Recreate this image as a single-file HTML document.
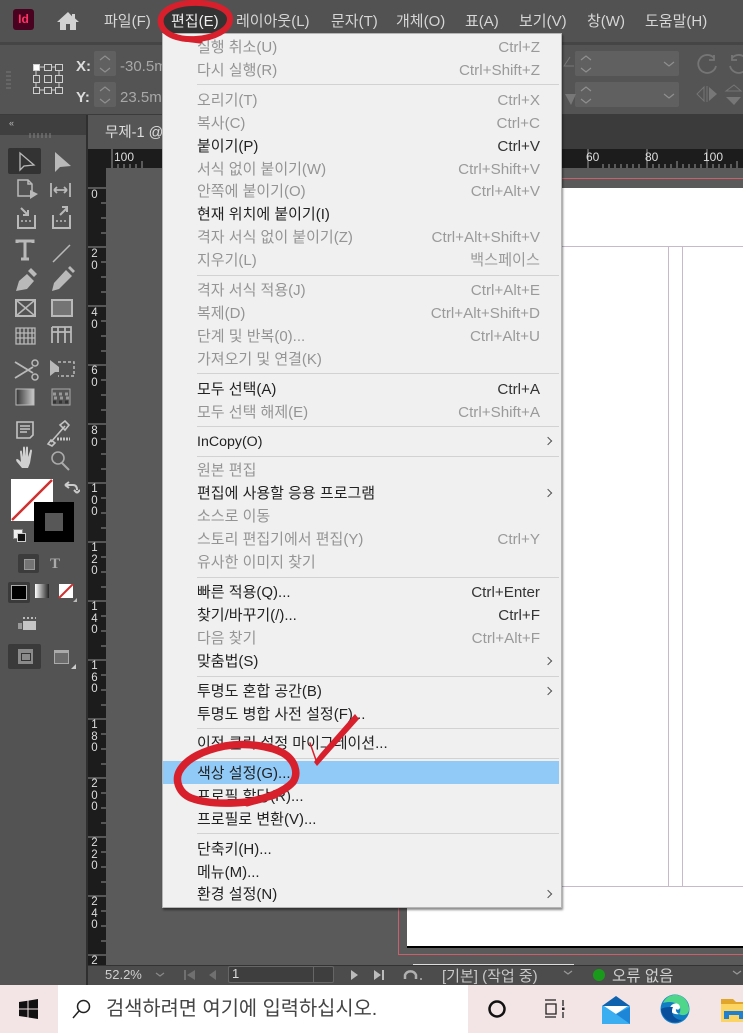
<!DOCTYPE html>
<html lang="ko"><head><meta charset="utf-8"><title>InDesign</title>
<style>
html,body{margin:0;padding:0;background:#535353}
#a{position:relative;width:743px;height:1033px;overflow:hidden;background:#535353;font-family:"Liberation Sans","Noto Sans CJK KR",sans-serif;filter:blur(.35px)}
#a div,#a span,#a svg{position:absolute}
.b{white-space:nowrap}
.m{color:#d6d6d6;font-size:15px;top:12px;line-height:20px;white-space:nowrap}
.r{left:197px;font-size:15px;line-height:20px;color:#222;white-space:nowrap;margin-top:1px}
.d{color:#949494}
.s{right:203px;font-size:15.2px;line-height:20px;color:#333;white-space:nowrap;margin-top:1px}
.sd{color:#9a9a9a}
.sep{left:197px;width:362px;height:1px;background:#d2d2d2}
.ar{left:545px;width:5px;height:5px;border-top:1.3px solid #555;border-right:1.3px solid #555;transform:rotate(45deg)}
.rn{color:#ddd;font-size:11.5px;line-height:11.5px;left:90px;width:9px;text-align:center;white-space:normal}
.rt{color:#ddd;font-size:12px;top:150px;line-height:14px}
.sp{background:#606060;border-radius:2px}
</style></head><body><div id="a">
<!-- backgrounds -->
<div style="left:0;top:0;width:743px;height:42px;background:#525252"></div>
<div style="left:0;top:42px;width:743px;height:3px;background:#454545"></div>
<div style="left:0;top:45px;width:743px;height:70px;background:#545454"></div>
<div style="left:0;top:114px;width:743px;height:36px;background:#3b3b3b"></div>
<div style="left:0;top:115px;width:86px;height:20px;background:#3f3f3f"></div>
<div style="left:0;top:135px;width:86px;height:850px;background:#535353"></div>
<div style="left:86px;top:115px;width:2px;height:870px;background:#2f2f2f"></div>
<div style="left:88px;top:115px;width:76px;height:35px;background:#555"></div>
<!-- pasteboard -->
<div style="left:88px;top:150px;width:655px;height:815px;background:#5a5a5a"></div>
<!-- page -->
<div style="left:398px;top:178px;width:345px;height:777px;border:1px solid #c9606a;border-right:0;box-sizing:border-box"></div>
<div style="left:407px;top:188px;width:336px;height:758px;background:#fff"></div>
<div style="left:407px;top:946px;width:336px;height:2px;background:#000"></div>
<div style="left:407px;top:246px;width:336px;height:1px;background:#c8b8cc"></div>
<div style="left:407px;top:886px;width:336px;height:1px;background:#c8b8cc"></div>
<div style="left:668px;top:246px;width:1px;height:640px;background:#c8b8cc"></div>
<div style="left:682px;top:246px;width:1px;height:640px;background:#c8b8cc"></div>
<!-- rulers -->
<div style="left:88px;top:149px;width:655px;height:19px;background:#1c1c1c"></div>
<div style="left:88px;top:168px;width:18px;height:797px;background:#1c1c1c"></div>
<svg style="left:88px;top:149px" width="655" height="19"><path stroke="#999" stroke-width="1" fill="none" d="M24 0V19M500 0V19M559 0V19M619 0V19M30 15V19M36 15V19M42 15V19M48 15V19M54 12V19M515 15V19M521 15V19M527 15V19M533 15V19M539 15V19M545 15V19M551 15V19M565 15V19M571 15V19M577 15V19M583 15V19M589 12V19M595 15V19M601 15V19M607 15V19M613 15V19M625 15V19M631 15V19M637 15V19M643 15V19M649 12V19"/></svg>
<svg style="left:88px;top:168px" width="18" height="797"><path stroke="#909090" stroke-width="1" fill="none" d="M0 20H18M0 79H18M0 138H18M0 197H18M0 256H18M0 315H18M0 374H18M0 433H18M0 492H18M0 551H18M0 610H18M0 669H18M0 728H18M0 787H18M13 35H18M13 50H18M13 65H18M13 94H18M13 109H18M13 124H18M13 153H18M13 168H18M13 183H18M13 212H18M13 227H18M13 242H18M13 271H18M13 286H18M13 301H18M13 330H18M13 345H18M13 360H18M13 389H18M13 404H18M13 419H18M13 448H18M13 463H18M13 478H18M13 507H18M13 522H18M13 537H18M13 566H18M13 581H18M13 596H18M13 625H18M13 640H18M13 655H18M13 684H18M13 699H18M13 714H18M13 743H18M13 758H18M13 773H18"/></svg>
<span class="rt" style="left:114px">100</span><span class="rt" style="left:586px">60</span><span class="rt" style="left:645px">80</span><span class="rt" style="left:703px">100</span>
<div class="rn" style="top:190px">0</div>
<div class="rn" style="top:249px">2<br>0</div>
<div class="rn" style="top:308px">4<br>0</div>
<div class="rn" style="top:366px">6<br>0</div>
<div class="rn" style="top:426px">8<br>0</div>
<div class="rn" style="top:484px">1<br>0<br>0</div>
<div class="rn" style="top:543px">1<br>2<br>0</div>
<div class="rn" style="top:602px">1<br>4<br>0</div>
<div class="rn" style="top:661px">1<br>6<br>0</div>
<div class="rn" style="top:720px">1<br>8<br>0</div>
<div class="rn" style="top:779px">2<br>0<br>0</div>
<div class="rn" style="top:838px">2<br>2<br>0</div>
<div class="rn" style="top:897px">2<br>4<br>0</div>
<div class="rn" style="top:956px">2</div>
<span class="b" style="left:105px;top:123px;font-size:14.5px;line-height:20px;color:#ddd">무제-1 @</span>
<!-- title bar -->
<div style="left:13px;top:9px;width:21px;height:21px;background:#49021f;border-radius:3px"></div>
<span style="left:13px;top:9px;width:21px;text-align:center;font-size:12px;font-weight:bold;line-height:20px;color:#ff3366">Id</span>
<svg style="left:56px;top:11px" width="24" height="20"><path fill="#d2d2d2" d="M12 1 1 11h3v8h6v-6h4v6h6v-8h3l-4-3.600V3h-3v2.200z"/></svg>
<svg style="left:0;top:0" width="240" height="50"><ellipse cx="195" cy="21" rx="33" ry="16" fill="#333"/></svg>
<span class="m" style="left:104px">파일(F)</span>
<span class="m" style="left:171px;color:#eee">편집(E)</span>
<span class="m" style="left:236px">레이아웃(L)</span>
<span class="m" style="left:331px">문자(T)</span>
<span class="m" style="left:396px">개체(O)</span>
<span class="m" style="left:465px">표(A)</span>
<span class="m" style="left:519px">보기(V)</span>
<span class="m" style="left:587px">창(W)</span>
<span class="m" style="left:645px">도움말(H)</span>
<!-- control bar -->
<svg style="left:4px;top:60px" width="60" height="40"><path stroke="#777" d="M2 12h5M2 16h5M2 20h5M2 24h5M2 28h5" fill="none"/></svg>
<svg style="left:32px;top:63px" width="32" height="32" fill="none" stroke="#cfcfcf" stroke-width="1"><rect x="1.500" y="1.500" width="6" height="6" fill="#fff"/><rect x="12.500" y="1.500" width="7" height="6"/><rect x="23.500" y="1.500" width="7" height="6"/><rect x="1.500" y="12.500" width="6" height="7"/><rect x="12.500" y="12.500" width="7" height="7"/><rect x="23.500" y="12.500" width="7" height="7"/><rect x="1.500" y="24.500" width="6" height="6"/><rect x="12.500" y="24.500" width="7" height="6"/><rect x="23.500" y="24.500" width="7" height="6"/><path d="M8 4h4M20 4h3M4 8v4M27 8v4M4 20v4M27 20v4M8 27h4M20 27h3"/></svg>
<span style="left:76px;top:57px;font-size:15px;font-weight:bold;line-height:20px;color:#ddd">X:</span>
<span style="left:76px;top:88px;font-size:15px;font-weight:bold;line-height:20px;color:#ddd">Y:</span>
<div class="sp" style="left:94px;top:51px;width:22px;height:25px"></div>
<div class="sp" style="left:94px;top:82px;width:22px;height:25px"></div>
<svg style="left:94px;top:51px" width="22" height="56" fill="none" stroke="#8f8f8f" stroke-width="1.200"><path d="M6 9l5-4 5 4M6 17l5 4 5-4M6 40l5-4 5 4M6 48l5 4 5-4"/></svg>
<span class="b" style="left:120px;top:57px;font-size:15px;line-height:20px;color:#a8a8a8">-30.5m</span>
<span class="b" style="left:120px;top:88px;font-size:15px;line-height:20px;color:#a8a8a8">23.5m</span>
<div class="sp" style="left:575px;top:51px;width:104px;height:25px"></div>
<div class="sp" style="left:575px;top:82px;width:104px;height:25px"></div>
<svg style="left:575px;top:51px" width="104" height="56" fill="none" stroke="#8f8f8f" stroke-width="1.200"><path d="M6 9l5-4 5 4M6 17l5 4 5-4M6 40l5-4 5 4M6 48l5 4 5-4M89 11l5 4 5-4M89 43l5 4 5-4"/></svg>
<svg style="left:562px;top:50px" width="14" height="60"><path fill="#777" d="M3 44h11l-5 11z"/><path fill="none" stroke="#777" d="M8 7 2 16h10"/></svg>
<svg style="left:688px;top:50px" width="55" height="60" fill="none" stroke="#757575" stroke-width="1.800"><path d="M26 8a9 9 0 1 0 2 8M26 5v5h-5"/><path d="M44 8a9 9 0 1 1 -2 8M44 5v5h5"/><path d="M19 36v16" stroke-width="1"/><path fill="#777" stroke="none" d="M21 37l8 7-8 7z"/><path d="M16 37l-7 7 7 7z" stroke-width="1"/><path fill="#777" stroke="none" d="M38 47h15l-7 8z"/><path d="M38 41h15l-7-6z" stroke-width="1"/></svg>
<!-- tools -->
<span style="left:9px;top:118px;font-size:9px;line-height:10px;color:#bbb">«</span>
<svg style="left:28px;top:133px" width="28" height="5"><path stroke="#808080" d="M2 0v5M6 0v5M10 0v5M14 0v5M18 0v5M22 0v5"/></svg>
<div style="left:8px;top:148px;width:33px;height:26px;background:#333;border-radius:2px"></div>
<svg style="left:8px;top:148px" width="75" height="300" fill="none" stroke="#b9b9b9" stroke-width="1.500">
<path d="M12 5v17l4-4 10-1z" stroke-width="1.300"/>
<path fill="#b9b9b9" stroke="none" d="M47 4v20l5-5 11-1z"/>
<path d="M12 32h8l4 4v12H10V32zM20 32v4h4"/><path fill="#b9b9b9" stroke="none" d="M22 42l8 4-8 5z"/>
<path d="M43 35v14M62 35v14M46 42h13M46 42l3-3M46 42l3 3M59 42l-3-3M59 42l-3 3" stroke-width="1.800"/>
<g transform="translate(0,-3)"><path d="M10 70v13h17V70" stroke-width="2"/><path d="M13 63l7 7M20 65v5h-5" stroke-width="2"/><path d="M13 76h11" stroke-dasharray="2 2"/>
<path d="M45 70v13h17V70" stroke-width="2"/><path d="M52 70l7-7M54 62h5v5" stroke-width="2"/><path d="M48 76h11" stroke-dasharray="2 2"/></g>
<g transform="translate(0,-4)"><path d="M9 99v-2h16v2M17 97v18M13 115h8" stroke-width="3"/>
<path d="M45 118l17-17"/></g>
<g transform="translate(0,-7)"><path fill="#b9b9b9" stroke="none" d="M8 150l3-10 8-7 7 7-7 8zM20 130l3-3 6 6-3 3z"/>
<path fill="#b9b9b9" stroke="none" d="M44 150l2-8 12-13 6 6-13 13zM60 127l2-2 5 5-2 2z"/></g>
<rect x="8" y="152" width="19" height="16" stroke-width="2"/><path d="M8 152l19 16M27 152L8 168"/>
<rect x="44" y="152" width="20" height="16" stroke-width="2" fill="#747474"/>
<g transform="translate(0,-10)"><path d="M8 190h19v16H8zM8 195h19M8 200h19M12 190v16M16 190v16M20 190v16M24 190v16" stroke-width="1.300"/>
<path d="M44 189h19v16M44 189v16M44 194h19M50 189v16M57 189v16" stroke-width="1.800"/></g>
<circle cx="27" cy="215" r="3"/><circle cx="27" cy="229" r="3"/><path d="M7 214l18 11M7 230l18-11" stroke-width="1.800"/>
<path fill="#b9b9b9" stroke="none" d="M42 212v16l5-4 4 0 0-5z"/><path d="M50 214h16v14H50" stroke-dasharray="3 2"/>
</svg>
<svg style="left:15px;top:388px;" width="60" height="20"><defs><linearGradient id="g1"><stop offset="0" stop-color="#333"/><stop offset="1" stop-color="#ccc"/></linearGradient></defs><rect x="1" y="1" width="18" height="16" fill="url(#g1)" stroke="#bbb"/><rect x="37" y="1" width="18" height="16" fill="#555" stroke="#aaa"/><path stroke="#999" stroke-dasharray="3 3" stroke-width="3" d="M38 6h16M39 10h16"/><path stroke="#333" stroke-dasharray="3 3" stroke-width="3" d="M38 14h16"/></svg>
<svg style="left:14px;top:420px" width="62" height="54" fill="none" stroke="#c3c3c3" stroke-width="1.600"><path d="M3 2h16v13l-3 3H3zM6 6h10M6 9h10M6 12h7"/><path d="M37 22l14-16M46 5l5-4 4 4-4 5zM34 24l3-4 4 3-3 3z"/><path d="M43 19h13" stroke-width="3" stroke-dasharray="2 1"/><g transform="translate(0,4)"><path fill="#d0d0d0" stroke="none" d="M3 38c-2-3 0-4 2-2l2 2-1-10c0-2 2-2 2 0l1 5V24c0-2 2-2 2 0v8l1-8c0-2 2-2 2 0v9l2-6c0-2 2-2 2 0l-2 12-2 5H8z"/><circle cx="44" cy="34" r="6" stroke="#aaa"/><path d="M48 39l7 7" stroke="#aaa" stroke-width="2"/></g></svg>
<!-- fill/stroke -->
<div style="left:11px;top:479px;width:42px;height:42px;background:#fff"></div>
<svg style="left:11px;top:479px" width="42" height="42"><path d="M1 41L41 1" stroke="#d03030" stroke-width="2.500"/></svg>
<div style="left:34px;top:502px;width:40px;height:40px;background:#000"></div>
<div style="left:45px;top:513px;width:18px;height:18px;background:#575757"></div>
<svg style="left:64px;top:480px" width="16" height="16" fill="none" stroke="#ccc" stroke-width="2"><path d="M2 5h7q4 0 4 5M1 5l4-3M1 5l4 3M13 13l-3-3M13 13l3-3"/></svg>
<div style="left:13px;top:529px;width:8px;height:8px;background:#eee;border:1px solid #888"></div>
<div style="left:17px;top:533px;width:7px;height:7px;background:#111;border:1px solid #ccc"></div>
<div style="left:18px;top:554px;width:21px;height:19px;background:#3c3c3c;border-radius:2px"></div>
<div style="left:24px;top:559px;width:9px;height:9px;background:#747474;border:1px solid #999"></div>
<span style="left:50px;top:554px;font-family:'Liberation Serif',serif;font-weight:bold;font-size:15px;line-height:20px;color:#aaa">T</span>
<div style="left:8px;top:582px;width:22px;height:21px;background:#3a3a3a;border-radius:2px"></div>
<div style="left:11px;top:585px;width:14px;height:13px;background:#000;border:1px solid #aaa"></div>
<svg style="left:35px;top:584px" width="42" height="22"><defs><linearGradient id="g2"><stop offset="0" stop-color="#fff"/><stop offset="1" stop-color="#222"/></linearGradient></defs><rect width="14" height="14" fill="url(#g2)"/><rect x="24" width="14" height="14" fill="#fff"/><path d="M24 14L38 0" stroke="#d03030" stroke-width="2"/><path d="M38 18h4v-4z" fill="#bbb"/></svg>
<svg style="left:18px;top:616px" width="18" height="18"><rect x="5" y="5" width="13" height="9" fill="#c5c5c5"/><path stroke="#bbb" stroke-width="2" stroke-dasharray="2 2" d="M5 2h13M0 9h4"/><rect x="0" y="7" width="4" height="6" fill="#999"/></svg>
<div style="left:8px;top:644px;width:33px;height:25px;background:#3a3a3a;border-radius:2px"></div>
<div style="left:18px;top:649px;width:15px;height:15px;background:#8a8a8a"></div>
<div style="left:21px;top:653px;width:8px;height:6px;border:1px solid #333"></div>
<div style="left:54px;top:650px;width:15px;height:14px;background:#6c6c6c;border:1px solid #aaa;border-top:3px solid #aaa;box-sizing:border-box"></div>
<svg style="left:71px;top:664px" width="5" height="5"><path d="M5 0v5H0z" fill="#ccc"/></svg>
<!-- status bar -->
<div style="left:88px;top:965px;width:655px;height:20px;background:#4c4c4c;border-top:1px solid #333;box-sizing:border-box"></div>
<span style="left:105px;top:966px;font-size:13px;line-height:17px;color:#cfcfcf">52.2%</span>
<svg style="left:150px;top:966px" width="240" height="18" fill="none"><path stroke="#8a8a8a" stroke-width="1.200" d="M6 7l4 3 4-3M166 7l4 3 4-3"/><path fill="#707070" d="M36 4v10h-2V4zM45 4v10l-8-5zM66 4v10l-7-5z"/><path fill="#bbb" d="M201 4l7 5-7 5zM224 4l7 5-7 5zM232 4h2v10h-2z"/></svg>
<div style="left:228px;top:966px;width:106px;height:17px;background:#3e3e3e;border:1px solid #666;box-sizing:border-box;border-radius:2px"></div>
<div style="left:313px;top:966px;width:1px;height:17px;background:#666"></div>
<span style="left:232px;top:965px;font-size:13px;line-height:18px;color:#ddd">1</span>
<svg style="left:403px;top:966px" width="22" height="16" fill="none" stroke="#b0b0b0" stroke-width="2.500"><path d="M2 13V9a6 6 0 0 1 11 0v4"/><path d="M17 13h2" stroke-width="1.500"/></svg>
<div style="left:413px;top:964px;width:161px;height:1px;background:#ddd"></div>
<span class="b" style="left:442px;top:968px;font-size:15px;line-height:18px;color:#c8c8c8">[기본] (작업 중)</span>
<svg style="left:563px;top:968px" width="180" height="12" fill="none" stroke="#999" stroke-width="1.200"><path d="M1 3l4 3 4-3M170 3l4 3 4-3"/></svg>
<div style="left:593px;top:969px;width:12px;height:12px;background:#1a9a1a;border-radius:50%"></div>
<span class="b" style="left:612px;top:968px;font-size:15.5px;line-height:18px;color:#d0d0d0">오류 없음</span>
<!-- taskbar -->
<div style="left:0;top:985px;width:743px;height:48px;background:#f3e4e5"></div>
<div style="left:58px;top:985px;width:410px;height:48px;background:#fff"></div>
<svg style="left:19px;top:999px" width="20" height="20"><path fill="#111" d="M0 3l8.500-1.200V9.500H0zM9.500 1.600 19 0v9.500H9.500zM0 10.500h8.500v7.800L0 17zM9.500 10.500H19V20l-9.500-1.500z"/></svg>
<svg style="left:71px;top:999px" width="20" height="20" fill="none" stroke="#222" stroke-width="1.500"><circle cx="12.500" cy="7.500" r="6"/><path d="M8 12 2 19"/></svg>
<span class="b" style="left:106px;top:997px;font-size:19.8px;line-height:24px;color:#444">검색하려면 여기에 입력하십시오.</span>
<svg style="left:487px;top:999px" width="20" height="20"><circle cx="10" cy="10" r="7.500" fill="none" stroke="#111" stroke-width="2.500"/></svg>
<svg style="left:544px;top:999px" width="24" height="20" fill="none" stroke="#222" stroke-width="1.300"><path d="M1 1h11M1 18h11M2 5h10v10H2zM19 1v6M19 13v6"/><rect x="18" y="8.500" width="2.500" height="2.500" fill="#222" stroke="none"/></svg>
<svg style="left:601px;top:995px" width="30" height="30"><path fill="#0f62ae" d="M15 1 1 11l14 9 14-9z"/><path fill="#3aaef0" d="M1 11h28v18H1z"/><path fill="#fff" d="M3 11h24L15 19z"/><path fill="#1e86d6" d="M15 19 29 12v17z"/></svg>
<svg style="left:660px;top:994px" width="30" height="30"><circle cx="15" cy="15" r="14.500" fill="#0f7cc4"/><path fill="#4fd68a" d="M3 9C8-3 27-2 29 14c1 8-8 8-10 6 2-3 2-8-2-10C12 7 6 8 3 9z"/><path fill="#fff" d="M10 15c0-6 9-8 10-2 0 3-3 3-4 2 0 0-1 3 3 5-3 1-9-1-9-5z"/><path fill="#0a4f9c" d="M1 15c1 11 13 17 21 11-8 0-12-7-9-13-4 0-9 0-12 2z"/></svg>
<svg style="left:721px;top:997px" width="22" height="26"><path fill="#e0a52a" d="M0 2h12l3 3H22v5H0z"/><path fill="#fcd462" d="M0 7h22v18H0z"/><path fill="#1f7fd0" d="M3 14h19v8h-4v-4H8v4H3z"/></svg>
<!-- menu -->
<div style="left:162px;top:33px;width:400px;height:875px;background:#f0f0f0;border:1px solid #b5b5b5;box-sizing:border-box;box-shadow:1px 2px 2px rgba(0,0,0,.45)"></div>
<div style="left:163px;top:761px;width:396px;height:23px;background:#91c9f7"></div>
<div class="sep" style="top:84px"></div><div class="sep" style="top:275px"></div><div class="sep" style="top:373px"></div><div class="sep" style="top:426px"></div><div class="sep" style="top:456px"></div><div class="sep" style="top:577px"></div><div class="sep" style="top:676px"></div><div class="sep" style="top:728px"></div><div class="sep" style="top:758px"></div><div class="sep" style="top:833px"></div>
<span class="r d" style="top:37px">실행 취소(U)</span><span class="s sd" style="top:37px">Ctrl+Z</span>
<span class="r d" style="top:60px">다시 실행(R)</span><span class="s sd" style="top:60px">Ctrl+Shift+Z</span>
<span class="r d" style="top:90px">오리기(T)</span><span class="s sd" style="top:90px">Ctrl+X</span>
<span class="r d" style="top:113px">복사(C)</span><span class="s sd" style="top:113px">Ctrl+C</span>
<span class="r" style="top:136px">붙이기(P)</span><span class="s" style="top:136px">Ctrl+V</span>
<span class="r d" style="top:159px">서식 없이 붙이기(W)</span><span class="s sd" style="top:159px">Ctrl+Shift+V</span>
<span class="r d" style="top:181px">안쪽에 붙이기(O)</span><span class="s sd" style="top:181px">Ctrl+Alt+V</span>
<span class="r" style="top:204px">현재 위치에 붙이기(I)</span>
<span class="r d" style="top:227px">격자 서식 없이 붙이기(Z)</span><span class="s sd" style="top:227px">Ctrl+Alt+Shift+V</span>
<span class="r d" style="top:250px">지우기(L)</span><span class="s sd" style="top:250px">백스페이스</span>
<span class="r d" style="top:280px">격자 서식 적용(J)</span><span class="s sd" style="top:280px">Ctrl+Alt+E</span>
<span class="r d" style="top:303px">복제(D)</span><span class="s sd" style="top:303px">Ctrl+Alt+Shift+D</span>
<span class="r d" style="top:326px">단계 및 반복(0)...</span><span class="s sd" style="top:326px">Ctrl+Alt+U</span>
<span class="r d" style="top:349px">가져오기 및 연결(K)</span>
<span class="r" style="top:379px">모두 선택(A)</span><span class="s" style="top:379px">Ctrl+A</span>
<span class="r d" style="top:402px">모두 선택 해제(E)</span><span class="s sd" style="top:402px">Ctrl+Shift+A</span>
<span class="r" style="top:431px;font-size:14.2px">InCopy(O)</span><div class="ar" style="top:438px"></div>
<span class="r d" style="top:460px">원본 편집</span>
<span class="r" style="top:483px">편집에 사용할 응용 프로그램</span><div class="ar" style="top:490px"></div>
<span class="r d" style="top:506px">소스로 이동</span>
<span class="r d" style="top:529px">스토리 편집기에서 편집(Y)</span><span class="s sd" style="top:529px">Ctrl+Y</span>
<span class="r d" style="top:552px">유사한 이미지 찾기</span>
<span class="r" style="top:582px">빠른 적용(Q)...</span><span class="s" style="top:582px">Ctrl+Enter</span>
<span class="r" style="top:605px">찾기/바꾸기(/)...</span><span class="s" style="top:605px">Ctrl+F</span>
<span class="r d" style="top:628px">다음 찾기</span><span class="s sd" style="top:628px">Ctrl+Alt+F</span>
<span class="r" style="top:651px">맞춤법(S)</span><div class="ar" style="top:658px"></div>
<span class="r" style="top:681px">투명도 혼합 공간(B)</span><div class="ar" style="top:688px"></div>
<span class="r" style="top:704px">투명도 병합 사전 설정(F)...</span>
<span class="r" style="top:733px">이전 클릭 설정 마이그레이션...</span>
<span class="r" style="top:763px">색상 설정(G)...</span>
<span class="r" style="top:786px">프로필 할당(R)...</span>
<span class="r" style="top:809px">프로필로 변환(V)...</span>
<span class="r" style="top:839px">단축키(H)...</span>
<span class="r" style="top:862px">메뉴(M)...</span>
<span class="r" style="top:884px">환경 설정(N)</span><div class="ar" style="top:891px"></div>
<!-- red annotations -->
<svg style="left:0;top:0" width="743" height="1033" fill="none" stroke="#d8202c" stroke-linecap="round" stroke-linejoin="round">
<path d="M161 24c-3-11 10-20 30-21 20-1 39 5 39 16 0 11-16 19-34 20-17 1-32-4-35-15z" stroke-width="6"/>
<path d="M184 39l16 2" stroke-width="5"/>
<path d="M247 802c18-3 37-10 46-20 6-9 2-22-10-29-11-6-34-11-58-7-20 4-39 12-46 26-4 9 0 21 12 26 16 6 36 6 56 4" stroke-width="7.500"/>
<path d="M247 803l28-8" stroke-width="7"/>
<path d="M310 743l7 20" stroke-width="1.500"/>
<path fill="#d8202c" stroke="none" d="M314 762l3 4 42-47-4-5-35 40z"/>
</svg>
</div></body></html>
